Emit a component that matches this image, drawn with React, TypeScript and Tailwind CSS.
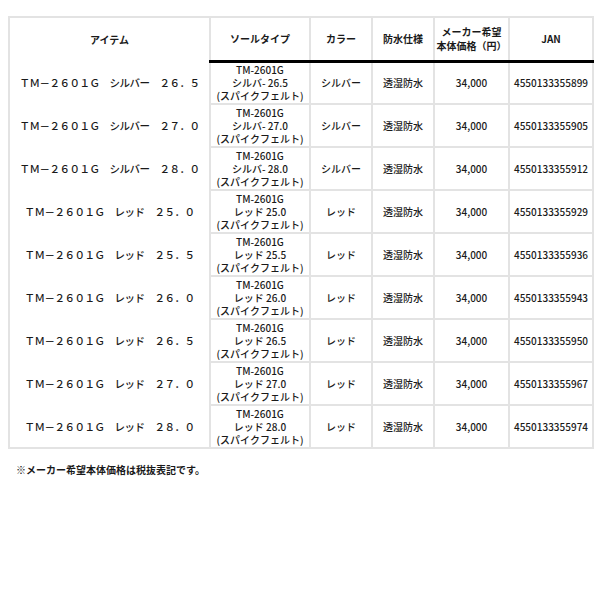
const rows = [
  { item: "ＴＭ－２６０１Ｇ　シルバー　２６．５", sole: "シルバ- 26.5", color: "シルバー", jan: "4550133355899" },
  { item: "ＴＭ－２６０１Ｇ　シルバー　２７．０", sole: "シルバ- 27.0", color: "シルバー", jan: "4550133355905" },
  { item: "ＴＭ－２６０１Ｇ　シルバー　２８．０", sole: "シルバ- 28.0", color: "シルバー", jan: "4550133355912" },
  { item: "ＴＭ－２６０１Ｇ　レッド　２５．０", sole: "レッド 25.0", color: "レッド", jan: "4550133355929" },
  { item: "ＴＭ－２６０１Ｇ　レッド　２５．５", sole: "レッド 25.5", color: "レッド", jan: "4550133355936" },
  { item: "ＴＭ－２６０１Ｇ　レッド　２６．０", sole: "レッド 26.0", color: "レッド", jan: "4550133355943" },
  { item: "ＴＭ－２６０１Ｇ　レッド　２６．５", sole: "レッド 26.5", color: "レッド", jan: "4550133355950" },
  { item: "ＴＭ－２６０１Ｇ　レッド　２７．０", sole: "レッド 27.0", color: "レッド", jan: "4550133355967" },
  { item: "ＴＭ－２６０１Ｇ　レッド　２８．０", sole: "レッド 28.0", color: "レッド", jan: "4550133355974" },
];

const cell = "border-2 border-[#e3e3e3] text-center align-middle px-0";
const head = cell + " border-b-[3px] border-b-black";

export default function App() {
  return (
    <div className="bg-white w-[600px] h-[600px] pt-[16px] pl-[8px] text-[#1a1a1a] text-[10px] leading-[13px] font-medium [font-family:'Noto_Sans_CJK_JP','Noto_Sans',sans-serif]">
      <table className="w-[584px] border-collapse table-fixed">
        <colgroup>
          <col className="w-[201px]" />
          <col className="w-[100px]" />
          <col className="w-[62px]" />
          <col className="w-[62px]" />
          <col className="w-[75px]" />
          <col className="w-[84px]" />
        </colgroup>
        <thead>
          <tr className="h-[44px] font-bold leading-[14px]">
            <th className="border-2 border-[#e3e3e3] border-b-0 text-center align-middle">アイテム</th>
            <th className={head}>ソールタイプ</th>
            <th className={head}>カラー</th>
            <th className={head}>防水仕様</th>
            <th className={head}>
              メーカー希望
              <br />
              本体価格（円）
            </th>
            <th className={head}>JAN</th>
          </tr>
        </thead>
        <tbody>
          {rows.map((r, i) => (
            <tr key={r.jan} className="h-[43px]">
              <td
                className={
                  "border-x-2 border-[#e3e3e3] text-center align-middle text-[10.5px] tracking-[-0.5px] " +
                  (i === rows.length - 1 ? "border-b-2" : "")
                }
              >
                {r.item}
              </td>
              <td className={cell}>
                TM-2601G
                <br />
                {r.sole}
                <br />
                (スパイクフェルト)
              </td>
              <td className={cell}>{r.color}</td>
              <td className={cell}>透湿防水</td>
              <td className={cell}>34,000</td>
              <td className={cell}>{r.jan}</td>
            </tr>
          ))}
        </tbody>
      </table>
      <p className="mt-[14px] ml-[8px] font-bold">※メーカー希望本体価格は税抜表記です。</p>
    </div>
  );
}
